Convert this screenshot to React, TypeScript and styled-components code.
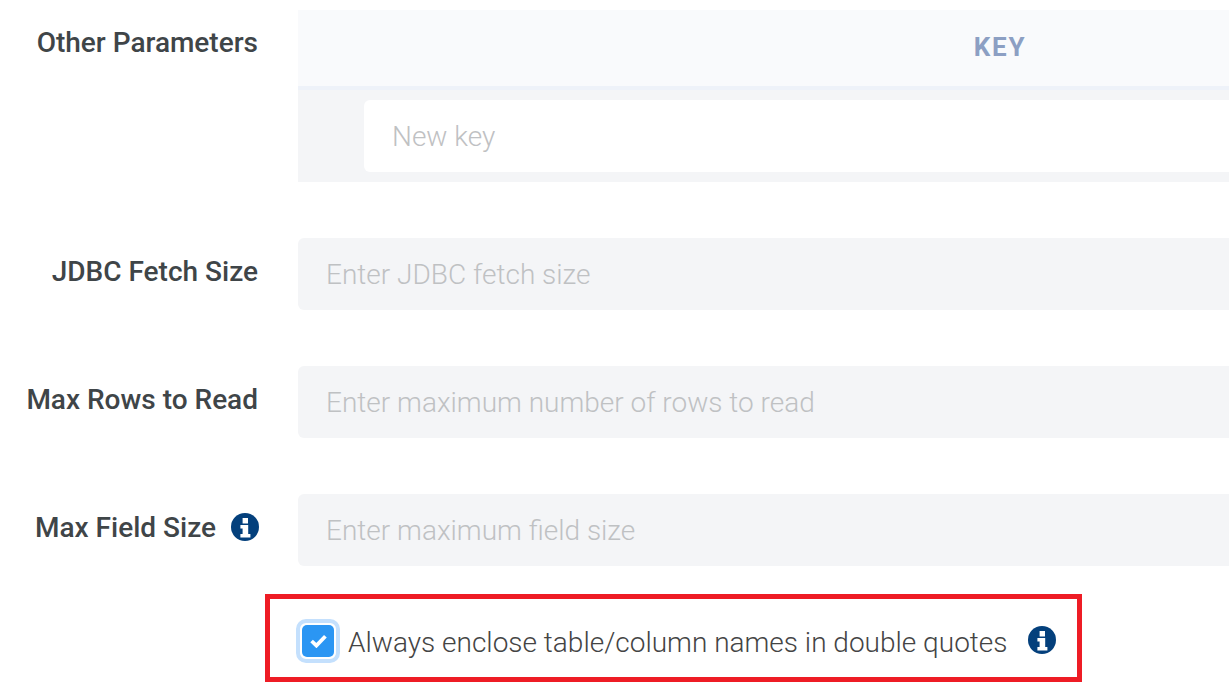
import * as React from "react";
import styled, { createGlobalStyle } from "styled-components";

const GlobalStyle = createGlobalStyle`
  html, body {
    margin: 0;
    padding: 0;
    background: #fff;
    overflow: hidden;
  }
  body {
    font-family: Roboto, "Liberation Sans", sans-serif;
  }
`;

const fields = [
  { label: "JDBC Fetch Size", placeholder: "Enter JDBC fetch size" },
  { label: "Max Rows to Read", placeholder: "Enter maximum number of rows to read" },
  { label: "Max Field Size", placeholder: "Enter maximum field size", info: true },
];

const InfoGlyph = ({ className }: { className?: string }) => (
  <svg className={className} viewBox="0 0 28 28">
    <circle cx="14" cy="14" r="14" fill="currentColor" />
    <path
      fill="#fff"
      d="M11.6 5h5.4v5.6h-5.4zM9.4 12h7.8v9h2.2v3.6H9.4V21h2.2v-5.4H9.4z"
    />
  </svg>
);

export default function App() {
  return (
    <Page>
      <GlobalStyle />
      <TableRow>
        <TableLabel>Other Parameters</TableLabel>
        <ParamsTable>
          <TableHead>KEY</TableHead>
          <TableBody>
            <KeyInput>New key</KeyInput>
          </TableBody>
        </ParamsTable>
      </TableRow>
      <Fields>
        {fields.map((field) => (
          <FieldRow key={field.label}>
            <FieldLabel>
              {field.label}
              {field.info && <LabelInfo />}
            </FieldLabel>
            <TextField>{field.placeholder}</TextField>
          </FieldRow>
        ))}
      </Fields>
      <Highlight>
        <CheckRing>
          <CheckBox>
            <svg width="17" height="14" viewBox="0 0 17 14">
              <path d="M1.6 7l4.8 4.6L15.4 2.2" fill="none" stroke="#fff" strokeWidth="3.8" />
            </svg>
          </CheckBox>
        </CheckRing>
        <CheckText>Always enclose table/column names in double quotes</CheckText>
        <CheckInfo />
      </Highlight>
    </Page>
  );
}

const Page = styled.div`
  width: 1229px;
  height: 696px;
  overflow: hidden;
  padding-top: 10px;
  box-sizing: border-box;
`;

const TableRow = styled.div`
  display: flex;
  gap: 40px;
`;

const TableLabel = styled.div`
  width: 258px;
  flex: none;
  box-sizing: border-box;
  padding-top: 15px;
  text-align: right;
  font-size: 28px;
  line-height: 36px;
  font-weight: 500;
  color: #3f4548;
`;

const ParamsTable = styled.div`
  flex: 1;
  min-width: 0;
  background: #f4f5f7;
  height: 172px;
  overflow: hidden;
`;

const TableHead = styled.div`
  width: 1404px;
  box-sizing: border-box;
  background: #f9fafc;
  border-bottom: 4px solid #eef2f9;
  height: 80px;
  padding-bottom: 2px;
  display: flex;
  align-items: center;
  justify-content: center;
  font-size: 26px;
  font-weight: 700;
  letter-spacing: 1.8px;
  color: #8c9fc3;
`;

const TableBody = styled.div`
  padding: 10px 0 10px 66px;
`;

const KeyInput = styled.div`
  height: 72px;
  border-radius: 6px 0 0 6px;
  background: #fff;
  padding-left: 28px;
  display: flex;
  align-items: center;
  font-size: 28px;
  font-weight: 300;
  color: #bfc1c3;
`;

const Fields = styled.div`
  display: flex;
  flex-direction: column;
  gap: 56px;
  margin-top: 56px;
`;

const FieldRow = styled.div`
  display: flex;
  gap: 40px;
  height: 72px;
`;

const FieldLabel = styled.div`
  width: 258px;
  flex: none;
  height: 66px;
  display: flex;
  align-items: center;
  justify-content: flex-end;
  gap: 15px;
  font-size: 28px;
  font-weight: 500;
  color: #3f4548;
`;

const InfoIcon = styled(InfoGlyph)`
  width: 28px;
  height: 28px;
  color: #04407c;
  flex: none;
`;

const LabelInfo = styled(InfoIcon)`
  margin-right: -1px;
`;

const TextField = styled.div`
  flex: 1;
  min-width: 0;
  background: #f4f5f7;
  border-radius: 6px 0 0 6px;
  padding-left: 28px;
  display: flex;
  align-items: center;
  font-size: 28px;
  font-weight: 300;
  color: #bfc1c3;
`;

const Highlight = styled.div`
  width: 817px;
  height: 88px;
  margin: 28px 0 0 265px;
  box-sizing: border-box;
  border: 5px solid #ee1c25;
  padding: 6px 0 0 26px;
  display: flex;
  align-items: center;
`;

const CheckRing = styled.div`
  width: 44px;
  height: 44px;
  box-sizing: border-box;
  border: 4px solid #c4e0fd;
  border-radius: 10px;
  padding: 2px;
  flex: none;
  display: flex;
`;

const CheckBox = styled.div`
  flex: 1;
  background: #2b96f3;
  border-radius: 5px;
  display: flex;
  align-items: center;
  justify-content: center;
`;

const CheckText = styled.div`
  margin: 2px 0 0 8px;
  font-size: 28px;
  font-weight: 300;
  color: #444;
  white-space: nowrap;
`;

const CheckInfo = styled(InfoIcon)`
  margin-left: 20px;
  margin-top: -2px;
`;
